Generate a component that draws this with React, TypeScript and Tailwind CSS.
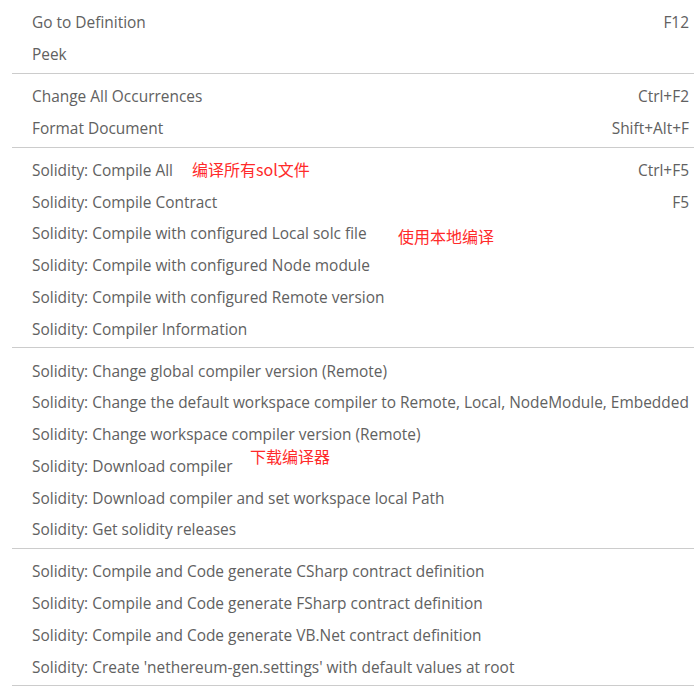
import React from "react";

type Item = { label: string; key?: string; note?: { text: string; cls: string } };

const sections: Item[][] = [
  [
    { label: "Go to Definition", key: "F12" },
    { label: "Peek" },
  ],
  [
    { label: "Change All Occurrences", key: "Ctrl+F2" },
    { label: "Format Document", key: "Shift+Alt+F" },
  ],
  [
    { label: "Solidity: Compile All", key: "Ctrl+F5", note: { text: "编译所有sol文件", cls: "left-[192px] top-[5px]" } },
    { label: "Solidity: Compile Contract", key: "F5" },
    { label: "Solidity: Compile with configured Local solc file", note: { text: "使用本地编译", cls: "left-[398px] top-[9px]" } },
    { label: "Solidity: Compile with configured Node module" },
    { label: "Solidity: Compile with configured Remote version" },
    { label: "Solidity: Compiler Information" },
  ],
  [
    { label: "Solidity: Change global compiler version (Remote)" },
    { label: "Solidity: Change the default workspace compiler to Remote, Local, NodeModule, Embedded" },
    { label: "Solidity: Change workspace compiler version (Remote)" },
    { label: "Solidity: Download compiler", note: { text: "下载编译器", cls: "left-[250px] top-[-4px]" } },
    { label: "Solidity: Download compiler and set workspace local Path" },
    { label: "Solidity: Get solidity releases" },
  ],
  [
    { label: "Solidity: Compile and Code generate CSharp contract definition" },
    { label: "Solidity: Compile and Code generate FSharp contract definition" },
    { label: "Solidity: Compile and Code generate VB.Net contract definition" },
    { label: "Solidity: Create 'nethereum-gen.settings' with default values at root" },
  ],
];

export default function App() {
  return (
    <div className="w-[694px] h-[699px] bg-white overflow-hidden pt-[7px] text-[#616161] text-[15.45px] font-['Open_Sans','Noto_Sans_CJK_SC',sans-serif]">
      {sections.map((sec, si) => (
        <div key={si}>
          {sec.map((it, ii) => (
            <div key={ii} className="relative h-[31.7px] flex items-center justify-between pl-[32px] pr-[5px] whitespace-nowrap">
              <span>{it.label}</span>
              {it.key && <span>{it.key}</span>}
              {it.note && (
                <span className={`absolute ${it.note.cls} text-[16px] leading-[18px] text-[#ff2a2a] font-['Noto_Sans_CJK_SC',sans-serif]`}>
                  {it.note.text}
                </span>
              )}
            </div>
          ))}
          <div className="h-[10.55px] pt-[2.3px] pl-[12px]">
            <div className="h-px bg-[#cccccc]" />
          </div>
        </div>
      ))}
    </div>
  );
}
